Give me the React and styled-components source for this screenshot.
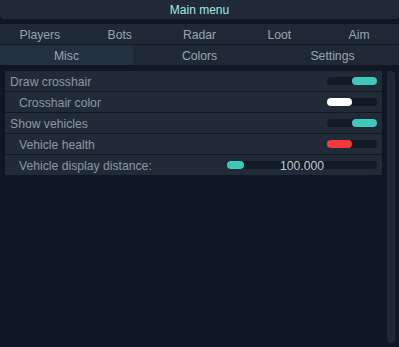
import React from 'react'
import styled, { createGlobalStyle } from 'styled-components';

const GlobalStyle = createGlobalStyle`
    html, body {
        margin: 0;
        padding: 0;
        background: #0f1724;
    }
    body {
        font-family: "Liberation Sans", Arial, sans-serif;
        font-size: 12px;
    }
`

const topTabs = ['Players', 'Bots', 'Radar', 'Loot', 'Aim'];
const subTabs = ['Misc', 'Colors', 'Settings'];

const options = [
    { label: 'Draw crosshair', type: 'toggle', on: true },
    { label: 'Crosshair color', type: 'color', color: '#ffffff', indent: true },
    { label: 'Show vehicles', type: 'toggle', on: true },
    { label: 'Vehicle health', type: 'color', color: '#f23a3a', indent: true },
    { label: 'Vehicle display distance:', type: 'slider', value: 100, max: 1000, indent: true },
];

const Control = ({ item }) => {
    if (item.type === 'slider') {
        return (
            <SliderTrack>
                <SliderKnob />
                <SliderValue>{item.value.toFixed(3)}</SliderValue>
            </SliderTrack>
        )
    }
    if (item.type === 'color') {
        return (
            <Track>
                <Fill color={item.color} />
            </Track>
        )
    }
    return (
        <Track>
            <Fill color="#40c9bb" right={item.on} />
        </Track>
    )
};

const App = () => {
    return (
        <Window>
            <GlobalStyle />
            <TitleBar>Main menu</TitleBar>
            <Tabs>
                <TabRow cols={5}>
                    {topTabs.map(t => <Tab key={t}>{t}</Tab>)}
                </TabRow>
                <TabRow cols={3}>
                    {subTabs.map(t => <Tab key={t} active={t === 'Misc'}>{t}</Tab>)}
                </TabRow>
            </Tabs>
            <Body>
                <List>
                    {options.map(item => (
                        <Row key={item.label}>
                            <Label indent={item.indent}>{item.label}</Label>
                            <Control item={item} />
                        </Row>
                    ))}
                </List>
                <Scrollbar />
            </Body>
        </Window>
    )
};

const Window = styled.div`
    width: 399px;
    height: 347px;
    display: flex;
    flex-direction: column;
    background: #0f1724;
    overflow: hidden;
`

const TitleBar = styled.div`
    height: 19px;
    display: flex;
    align-items: center;
    justify-content: center;
    background: #1f2937;
    color: #a3ebe4;
    font-size: 12px;
    border-radius: 0 0 4px 4px;
`

const Tabs = styled.div`
    margin-top: 5px;
    display: flex;
    flex-direction: column;
    gap: 1px;
    background: #121a26;
`

const TabRow = styled.div`
    display: grid;
    grid-template-columns: repeat(${props => props.cols}, 1fr);
    height: 20px;
    background: #1f2935;
`

const Tab = styled.div`
    display: flex;
    align-items: center;
    justify-content: center;
    padding-top: 2px;
    color: #9aa5b0;
    background: ${props => props.active ? '#233040' : 'transparent'};
    font-size: 12.2px;
    cursor: pointer;
`

const Body = styled.div`
    flex: 1;
    display: flex;
    padding: 6px 4px 4px 5px;
    gap: 5px;
    min-height: 0;
`

const List = styled.div`
    flex: 1;
    display: flex;
    flex-direction: column;
    gap: 1px;
    align-self: flex-start;
`

const Row = styled.div`
    height: 20px;
    display: flex;
    align-items: center;
    justify-content: space-between;
    padding-right: 5px;
    background: #212b38;
`

const Label = styled.div`
    padding-left: ${props => props.indent ? '14px' : '5px'};
    padding-top: 1px;
    color: #8c97a3;
    font-size: 12.2px;
    white-space: nowrap;
`

const Track = styled.div`
    width: 50px;
    height: 8px;
    border-radius: 4px;
    background: #111a25;
    display: flex;
`

const Fill = styled.div`
    width: 25px;
    height: 8px;
    border-radius: 4px;
    background: ${props => props.color};
    margin-left: ${props => props.right ? '25px' : '0'};
`

const SliderTrack = styled.div`
    position: relative;
    width: 150px;
    height: 8px;
    border-radius: 4px;
    background: #111a25;
`

const SliderKnob = styled.div`
    width: 17px;
    height: 8px;
    border-radius: 4px;
    background: #40c9bb;
`

const SliderValue = styled.div`
    position: absolute;
    left: 0;
    right: 0;
    top: -3px;
    line-height: 16px;
    text-align: center;
    color: #c3cbd3;
    font-size: 12.2px;
`

const Scrollbar = styled.div`
    width: 8px;
    height: 272px;
    border-radius: 4px;
    background: #1f2935;
`

export default App;
